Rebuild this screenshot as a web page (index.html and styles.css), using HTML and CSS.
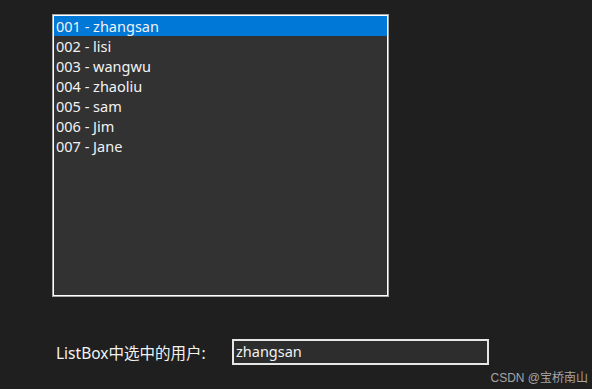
FILE: index.html
```html
<!DOCTYPE html>
<html>
<head>
<meta charset="utf-8">
<link rel="stylesheet" href="styles.css">
</head>
<body>
<div class="page">
  <ul class="listbox">
    <li class="item selected">001 - zhangsan</li>
    <li class="item">002 - lisi</li>
    <li class="item">003 - wangwu</li>
    <li class="item">004 - zhaoliu</li>
    <li class="item">005 - sam</li>
    <li class="item">006 - Jim</li>
    <li class="item">007 - Jane</li>
  </ul>
  <div class="row">
    <span class="label">ListBox中选中的用户:</span>
    <div class="textbox">zhangsan</div>
  </div>
  <div class="watermark">CSDN @宝桥南山</div>
</div>
</body>
</html>
```
FILE: styles.css
```css
html, body {
  margin: 0;
  padding: 0;
  background: #1f1f1f;
  width: 592px;
  height: 389px;
  overflow: hidden;
}
.page {
  position: relative;
  width: 592px;
  height: 389px;
  font-family: "Noto Sans", "Noto Sans CJK SC", sans-serif;
  font-size: 14.5px;
  color: #f2f2f2;
}
.listbox {
  list-style: none;
  padding: 0;
  position: relative;
  top: 14px;
  width: 333px;
  height: 279px;
  background: #323232;
  border: 1px solid #ffffff;
  box-shadow: 0 0 0 1px #a8a8a8;
  margin: 1px 0 0 53px;
}
.item {
  height: 20px;
  line-height: 21px;
  padding-left: 2px;
  white-space: nowrap;
}
.item.selected {
  background: #0078d7;
}
.row {
  display: flex;
  align-items: center;
  margin-top: 57px;
  height: 26px;
}
.label {
  margin-left: 56px;
  width: 176px;
  font-size: 15.5px;
}
.textbox {
  box-sizing: border-box;
  width: 257px;
  height: 26px;
  border: 2px solid #e6e6e6;
  background: #2d2d2d;
  padding-left: 2px;
  line-height: 21px;
}
.watermark {
  position: absolute;
  right: 4px;
  bottom: 5px;
  font-family: "Liberation Sans", "Noto Sans CJK SC", sans-serif;
  font-size: 12px;
  color: #a6a6a6;
}
```
